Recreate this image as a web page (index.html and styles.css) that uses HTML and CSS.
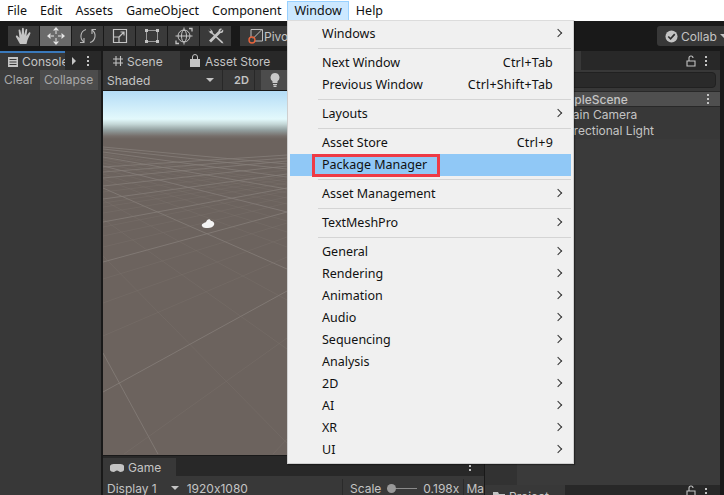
FILE: index.html
```html
<!DOCTYPE html>
<html lang="en">
<head>
    <meta charset="UTF-8">
    <title>Unity - Window menu</title>
    <link rel="stylesheet" href="styles.css">
</head>
<body>
    <!-- Menu bar -->
    <div class="menubar">
        <span class="menubar-item">File</span>
        <span class="menubar-item">Edit</span>
        <span class="menubar-item">Assets</span>
        <span class="menubar-item">GameObject</span>
        <span class="menubar-item">Component</span>
        <span class="menubar-item menubar-open">Window</span>
        <span class="menubar-item">Help</span>
    </div>

    <!-- Toolbar -->
    <div class="toolbar">
        <div class="tool-group">
            <div class="tool"><svg width="20" height="18" viewBox="0 0 20 18"><path d="M6 17 2 10c-.6-1.200.8-2 1.600-1L5.500 11 4.600 3.500c-.1-1.300 1.500-1.400 1.700-.2L7.500 8 8 1.800c.1-1.300 1.800-1.300 1.800 0L10.200 8l1.300-5.300c.3-1.200 1.900-.9 1.700.3L12.400 9l2.400-3.200c.8-1 2.100-.1 1.500 1L13.500 13 12.500 17Z" fill="#c4c4c4"/></svg></div>
            <div class="tool tool-active"><svg width="20" height="20" viewBox="0 0 20 20" fill="#e4e4e4"><path d="M10 1 13 4.500H7ZM10 19 7 15.500H13ZM1 10 4.500 7V13ZM19 10 15.500 13V7Z"/><path d="M9.500 5h1v3h-1ZM9.500 12h1v3h-1ZM5 9.500h3v1H5ZM12 9.500h3v1h-3Z"/></svg></div>
            <div class="tool"><svg width="20" height="20" viewBox="0 0 20 20" fill="none" stroke="#b8b8b8" stroke-width="1.100"><path d="M8 3.500A7 7 0 0 0 6 16"/><path d="M12 16.500A7 7 0 0 0 14 4"/><path d="M6 12V16.500H2M14 8V3.500H18"/></svg></div>
            <div class="tool"><svg width="18" height="18" viewBox="0 0 18 18" fill="none" stroke="#c4c4c4" stroke-width="1.200"><path d="M2.500 2.500H15.500V15.500H2.500ZM2.500 10H8V15.500M8 10 13 5M9.500 5H13V8.500"/></svg></div>
            <div class="tool"><svg width="18" height="18" viewBox="0 0 18 18" fill="#c4c4c4"><path d="M3.500 3.500h11v11h-11Z" fill="none" stroke="#9a9a9a"/><path d="M2 2h3v3H2ZM13 2h3v3h-3ZM2 13h3v3H2ZM13 13h3v3h-3Z"/></svg></div>
            <div class="tool"><svg width="20" height="20" viewBox="0 0 20 20" fill="none" stroke="#c4c4c4" stroke-width="1"><circle cx="10" cy="10" r="6"/><ellipse cx="10" cy="10" rx="2.500" ry="6"/><path d="M4 10h12M10 1.500v3M10 15.500v3M1.500 10h2.500M16 10h2.500"/><path d="M15 2.500h3v3M2 14.500v3h3" stroke-width="1.300"/></svg></div>
            <div class="tool"><svg width="20" height="20" viewBox="0 0 20 20" fill="#c4c4c4"><path d="M3.500 2 6.500 5 7 7 16.500 15.500 17.500 17.500 15.500 17 6 8 4 7 2 4 3.500 5.500 5 4.500Z"/><path d="M17 3.500 14.800 5.700 14 5 16 3c-1.500-1-3.500 0-3.500 2L3 14.500 5 16.500 14.500 7c2 .5 3.500-1.500 2.500-3.500Z"/></svg></div>
        </div>
        <div class="pivot">
            <svg width="16" height="16" viewBox="0 0 16 16" fill="none"><path d="M3 9V1.500H14.500V13H7M5 10.500 13.500 2" stroke="#bdbdbd"/><circle cx="4" cy="12" r="3" stroke="#e8643c" stroke-width="1.400"/></svg>
            <span>Pivot</span>
        </div>
        <div class="collab">
            <svg width="13" height="13" viewBox="0 0 14 14"><circle cx="7" cy="7" r="6.500" fill="#c4c4c4"/><path d="M3.500 7 6 9.500 10.500 4.500" fill="none" stroke="#303030" stroke-width="1.800"/></svg>
            <span>Collab</span>
            <span class="arrow-down arrow-collab"></span>
        </div>
    </div>

    <div class="workspace">
        <!-- Console -->
        <div class="panel-console">
            <div class="tabbar">
                <div class="tab tab-console">
                    <svg width="12" height="12" viewBox="0 0 12 12" fill="#c4c4c4"><path d="M1 1h10v10H1Zm1.500 2v1h7V3Zm0 2.500v1h7v-1Zm0 2.500v1h7V8Z" fill-rule="evenodd"/></svg>
                    <span class="tab-clip">Console</span>
                </div>
                <div class="tab-extra">
                    <span class="arrow-right"></span>
                    <span class="dots"><i></i><i></i><i></i></span>
                </div>
            </div>
            <div class="console-tools">
                <span class="console-btn">Clear</span>
                <span class="console-btn console-btn-on">Collapse</span>
            </div>
        </div>

        <!-- Scene + Game -->
        <div class="panel-center">
            <div class="tabbar">
                <div class="tab tab-scene">
                    <svg width="12" height="12" viewBox="0 0 12 12" fill="none" stroke="#c4c4c4" stroke-width="1.100"><path d="M4 1V11M8.500 1V11M1 4H11M1 8H11"/></svg>
                    <span>Scene</span>
                </div>
                <div class="tab tab-store">
                    <svg width="12" height="14" viewBox="0 0 12 14" fill="#c4c4c4"><path d="M1 5h10v8H1Z"/><path d="M3.500 5V3a2.500 2.500 0 0 1 5 0v2" fill="none" stroke="#c4c4c4"/></svg>
                    <span>Asset Store</span>
                </div>
            </div>
            <div class="scene-tools">
                <div class="shaded"><span>Shaded</span><span class="arrow-down"></span></div>
                <div class="btn-2d">2D</div>
                <div class="btn-light"><svg width="10" height="14" viewBox="0 0 10 14" fill="#c8c8c8"><path d="M5 0a4.500 4.500 0 0 1 2.500 8.200V10h-5V8.200A4.500 4.500 0 0 1 5 0ZM3 11h4v1H3Zm.5 1.500h3V14h-3Z"/></svg></div>
            </div>
            <div class="scene-view">
                <svg class="scene-grid" viewBox="103 92 382 363" fill="none">
                    <!-- major lines, two vanishing points -->
                    <g class="grid-major">
                        <path d="M103 393 287 292M103 263 287 213M103 223 287 189M103 200 287 175M103 187 287 167M103 179 287 162M103 173 287 159M103 168 287 156"/>
                        <path d="M103 354 287 692M103 189 287 270M103 167 287 213M103 158 287 190M103 153 287 178M103 150 287 170M103 148 287 165"/>
                    </g>
                    <g class="grid-minor">
                        <path d="M103 1137 287 743M103 637 287 440M103 470 287 339M103 337 287 258M103 304 287 238M103 280 287 224M103 248 287 204M103 237 287 198M103 228 287 192M103 214 287 184M103 208 287 180M103 204 287 177M103 193 287 171"/>
                        <path d="M103 257 287 444M103 220 287 350M103 201 287 301M103 180 287 248M103 175 287 233M103 170 287 222M103 164 287 205M103 161 287 199M103 159 287 194M103 156 287 186M103 155 287 183"/>
                    </g>
                </svg>
                <svg class="scene-gizmo" width="14" height="10" viewBox="0 0 14 10"><path d="M1 8C0 6 3 5 5 4 6 1 9 0 10 3c2 0 4 2 3 4-1 2-3 3-6 3-3 0-5 0-6-2Z" fill="#f4f4f4"/></svg>
            </div>
            <div class="game-tabbar">
                <div class="tab tab-game">
                    <svg width="14" height="10" viewBox="0 0 14 10" fill="#c4c4c4"><path d="M3.500 1h7a3.500 3.500 0 0 1 0 8c-1.500 0-2-1.500-3.500-1.500S5 9 3.500 9a3.500 3.500 0 0 1 0-8Z"/></svg>
                    <span>Game</span>
                </div>
                <span class="dots dots-game"><i></i><i></i><i></i></span>
            </div>
            <div class="game-tools">
                <div class="game-display"><span>Display 1</span><span class="arrow-down"></span></div>
                <div class="game-res">1920x1080</div>
                <div class="game-scale">
                    <span>Scale</span>
                    <span class="slider"><i></i></span>
                    <span>0.198x</span>
                </div>
                <div class="game-ma">Ma</div>
            </div>
        </div>

        <!-- Hierarchy + Project -->
        <div class="panel-right">
            <div class="tabbar tabbar-right">
                <div class="tab tab-hier"></div>
                <svg class="lock" width="10" height="12" viewBox="0 0 10 12" fill="none" stroke="#c4c4c4" stroke-width="1.100"><path d="M1 6h8v5H1ZM3 6V3a2 2 0 0 1 4 0"/></svg>
                <span class="dots"><i></i><i></i><i></i></span>
            </div>
            <div class="hier-search"><div class="search-box"></div></div>
            <div class="hier-scene">
                <span>SampleScene</span>
                <span class="dots"><i></i><i></i><i></i></span>
            </div>
            <div class="hier-item">Main Camera</div>
            <div class="hier-item">Directional Light</div>
            <div class="hier-fill"></div>
            <div class="project-tabbar">
                <div class="tab tab-project">
                    <svg width="12" height="10" viewBox="0 0 12 10" fill="#c4c4c4"><path d="M0 0h5l1 2h6v8H0Z"/></svg>
                    <span>Project</span>
                </div>
                <svg class="lock" width="10" height="12" viewBox="0 0 10 12" fill="none" stroke="#c4c4c4" stroke-width="1.100"><path d="M1 6h8v5H1ZM3 6V3a2 2 0 0 1 4 0"/></svg>
                <span class="dots"><i></i><i></i><i></i></span>
            </div>
        </div>
    </div>

    <!-- Open Window menu -->
    <div class="menu">
        <div class="menu-item"><span>Windows</span><span class="chev"></span></div>
        <div class="menu-sep"></div>
        <div class="menu-item"><span>Next Window</span><span class="shortcut">Ctrl+Tab</span></div>
        <div class="menu-item"><span>Previous Window</span><span class="shortcut">Ctrl+Shift+Tab</span></div>
        <div class="menu-sep"></div>
        <div class="menu-item"><span>Layouts</span><span class="chev"></span></div>
        <div class="menu-sep"></div>
        <div class="menu-item"><span>Asset Store</span><span class="shortcut">Ctrl+9</span></div>
        <div class="menu-item menu-hover"><span class="red-box">Package Manager</span></div>
        <div class="menu-sep"></div>
        <div class="menu-item"><span>Asset Management</span><span class="chev"></span></div>
        <div class="menu-sep"></div>
        <div class="menu-item"><span>TextMeshPro</span><span class="chev"></span></div>
        <div class="menu-sep"></div>
        <div class="menu-item"><span>General</span><span class="chev"></span></div>
        <div class="menu-item"><span>Rendering</span><span class="chev"></span></div>
        <div class="menu-item"><span>Animation</span><span class="chev"></span></div>
        <div class="menu-item"><span>Audio</span><span class="chev"></span></div>
        <div class="menu-item"><span>Sequencing</span><span class="chev"></span></div>
        <div class="menu-item"><span>Analysis</span><span class="chev"></span></div>
        <div class="menu-item"><span>2D</span><span class="chev"></span></div>
        <div class="menu-item"><span>AI</span><span class="chev"></span></div>
        <div class="menu-item"><span>XR</span><span class="chev"></span></div>
        <div class="menu-item"><span>UI</span><span class="chev"></span></div>
    </div>
</body>
</html>
```

FILE: styles.css
```css
html, body {
    height: 100%;
}

body {
    margin: 0;
    width: 724px;
    height: 495px;
    overflow: hidden;
    position: relative;
    display: flex;
    flex-direction: column;
    background-color: #191919;
    font-family: "Inter", "Liberation Sans", sans-serif;
    font-size: 12px;
    font-feature-settings: "calt" 0;
    color: #c4c4c4;
}

svg {
    flex: none;
}

/* Menu bar */
.menubar {
    flex: none;
    height: 21px;
    box-sizing: border-box;
    padding: 1px 0 0 1px;
    display: flex;
    align-items: stretch;
    background-color: #fff;
    font-family: "Noto Sans", sans-serif;
    font-size: 12.5px;
    color: #111;
}

.menubar-item {
    padding: 0 6px;
    line-height: 19px;
    margin-right: 1px;
}

.menubar-open {
    background-color: #cce8ff;
    box-shadow: inset 0 0 0 1px #99d1ff;
    margin-left: -1px;
    padding: 0 7px;
}

/* Toolbar */
.toolbar {
    flex: none;
    height: 30px;
    display: flex;
    align-items: center;
    padding-left: 8px;
    background-color: #191919;
}

.tool-group {
    display: flex;
    gap: 1px;
}

.tool {
    width: 31px;
    height: 20px;
    display: flex;
    align-items: center;
    justify-content: center;
    background-color: #3a3a3a;
}

.tool-active {
    background-color: #6a6a6a;
}

.pivot {
    margin-left: 9px;
    height: 20px;
    width: 60px;
    display: flex;
    align-items: center;
    padding-left: 8px;
    box-sizing: border-box;
    background-color: #3a3a3a;
}

.collab {
    margin-left: auto;
    width: 67px;
    height: 20px;
    display: flex;
    align-items: center;
    gap: 3px;
    padding-left: 8px;
    box-sizing: border-box;
    background-color: #383838;
    border-radius: 3px 0 0 3px;
    overflow: hidden;
    white-space: nowrap;
}

.arrow-collab {
    flex: none;
}

/* Panels */
.workspace {
    flex: 1;
    min-height: 0;
    display: flex;
    gap: 1px;
    background-color: #191919;
}

.panel-console {
    width: 101px;
    flex: none;
    background-color: #383838;
}

.panel-center {
    width: 381px;
    flex: none;
    margin-left: 1px;
    display: flex;
    flex-direction: column;
}

.panel-right {
    flex: 1;
    min-width: 0;
    display: flex;
    flex-direction: column;
    margin-right: 4px;
    background-color: #383838;
}

.tabbar {
    flex: none;
    height: 19px;
    display: flex;
    background-color: #282828;
}

.tab {
    display: flex;
    align-items: center;
    gap: 6px;
    box-sizing: border-box;
    background-color: #383838;
}

.tab-console {
    width: 65px;
    padding-left: 7px;
    gap: 3px;
    overflow: hidden;
    border-top: 2px solid #3a79bb;
    white-space: nowrap;
}

.tab-extra {
    flex: 1;
    display: flex;
    align-items: center;
    justify-content: space-between;
    padding: 0 12px 0 7px;
    background-color: #282828;
}

.arrow-right {
    width: 0;
    height: 0;
    border-left: 4px solid #c4c4c4;
    border-top: 4px solid transparent;
    border-bottom: 4px solid transparent;
}

.dots {
    display: flex;
    flex-direction: column;
    gap: 2px;
}

.dots i {
    width: 2px;
    height: 2px;
    background-color: #c4c4c4;
}

.console-tools {
    height: 20px;
    display: flex;
    background-color: #3c3c3c;
}

.console-btn {
    line-height: 20px;
    width: 40px;
    padding-left: 4px;
    box-sizing: border-box;
    color: #a8a8a8;
}

.console-btn-on {
    width: 58px;
    background-color: #4c4c4c;
}

.tab-scene {
    width: 77px;
    padding: 1px 0 0 9px;
    margin-right: 1px;
    gap: 3px;
}

.tab-store {
    width: 100px;
    padding: 1px 0 0 8px;
    gap: 4px;
    background-color: #282828;
}

.scene-tools {
    flex: none;
    height: 21px;
    box-sizing: border-box;
    display: flex;
    background-color: #383838;
    border-bottom: 1px solid #191919;
}

.shaded {
    width: 120px;
    box-sizing: border-box;
    padding: 0 8px 0 4px;
    display: flex;
    align-items: center;
    justify-content: space-between;
    border-right: 1px solid #282828;
}

.arrow-down {
    width: 0;
    height: 0;
    border-top: 4px solid #c4c4c4;
    border-left: 4px solid transparent;
    border-right: 4px solid transparent;
}

.btn-2d {
    width: 26px;
    box-sizing: border-box;
    margin-left: 6px;
    text-align: center;
    line-height: 20px;
    font-size: 11px;
    font-weight: 600;
    border-right: 1px solid #282828;
}

.btn-light {
    width: 28px;
    margin-left: 6px;
    display: flex;
    align-items: center;
    justify-content: center;
    background-color: #4c4c4c;
}

.scene-view {
    flex: 1;
    min-height: 0;
    position: relative;
    overflow: hidden;
    background: linear-gradient(#b4dcf6 0, #e3f9fc 28px, #c5d8d8 33px, #93a0a0 39px, #766f6b 45px, #6c635e 48px);
}

.scene-grid {
    position: absolute;
    left: 0;
    top: 0;
    width: 382px;
    height: 363px;
}

.grid-major {
    stroke: #857d78;
    stroke-width: 0.8;
}

.grid-minor {
    stroke: #7d7570;
    stroke-width: 0.7;
    stroke-opacity: 0.5;
}

.scene-gizmo {
    position: absolute;
    left: 98px;
    top: 127px;
}

.game-tabbar {
    flex: none;
    height: 20px;
    margin-top: 1px;
    display: flex;
    align-items: stretch;
    justify-content: space-between;
    background-color: #282828;
}

.tab-game {
    width: 73px;
    margin-top: 2px;
    padding: 1px 0 0 7px;
    gap: 4px;
}

.dots-game {
    align-self: center;
    margin-right: 13px;
}

.game-tools {
    flex: none;
    height: 19px;
    box-sizing: border-box;
    padding-top: 5px;
    display: flex;
    align-items: center;
    background-color: #383838;
    white-space: nowrap;
}

.game-display {
    width: 80px;
    box-sizing: border-box;
    display: flex;
    align-items: center;
    justify-content: space-between;
    padding: 0 4px;
}

.game-res {
    width: 160px;
    box-sizing: border-box;
    padding-left: 4px;
}

.game-scale {
    display: flex;
    align-items: center;
    gap: 6px;
    width: 122px;
    height: 19px;
    padding-left: 7px;
    box-sizing: border-box;
    border-left: 1px solid #2a2a2a;
    border-right: 1px solid #2a2a2a;
}

.slider {
    width: 30px;
    height: 1px;
    position: relative;
    background-color: #8a8a8a;
}

.slider i {
    position: absolute;
    left: 0;
    top: -4px;
    width: 9px;
    height: 9px;
    border-radius: 50%;
    background-color: #999;
}

.game-ma {
    padding-left: 3px;
    overflow: hidden;
}

.tabbar-right {
    align-items: center;
    gap: 9px;
    padding-right: 13px;
}

.tab-hier {
    width: 96px;
    height: 19px;
    margin-right: auto;
}

.hier-search {
    flex: none;
    height: 21px;
    padding: 2px 4px 0 0;
    box-sizing: border-box;
}

.search-box {
    height: 16px;
    box-sizing: border-box;
    background-color: #2a2a2a;
    border: 1px solid #212121;
    border-radius: 4px;
}

.hier-scene {
    flex: none;
    height: 16px;
    box-sizing: border-box;
    display: flex;
    align-items: center;
    justify-content: space-between;
    padding: 0 11px 0 64px;
    font-weight: 500;
    background-color: #4f4f4f;
    border-top: 1px solid #282828;
    border-bottom: 1px solid #282828;
}

.hier-item {
    flex: none;
    height: 16px;
    line-height: 16px;
    padding-left: 77px;
}

.hier-fill {
    flex: 1;
    background: linear-gradient(90deg, #323232 32px, #3a3a3a 32px);
}

.project-tabbar {
    flex: none;
    height: 10px;
    display: flex;
    align-items: flex-start;
    gap: 9px;
    padding-right: 13px;
    background-color: #282828;
    overflow: hidden;
}

.project-tabbar .dots {
    margin-top: 3px;
}

.tab-project {
    width: 80px;
    height: 20px;
    padding: 3px 0 0 8px;
    gap: 4px;
    margin-right: auto;
}

/* Open menu */
.menu {
    position: absolute;
    left: 287px;
    top: 20px;
    width: 287px;
    height: 444px;
    box-sizing: border-box;
    padding: 2px;
    background-color: #f0f0f0;
    border: 1px solid #cfcfcf;
    border-top-color: #dcdcdc;
    box-shadow: 1px 1px 1px rgba(0, 0, 0, 0.35);
    font-family: "Noto Sans", sans-serif;
    font-size: 12.5px;
    color: #111;
}

.menu-item {
    height: 22px;
    box-sizing: border-box;
    display: flex;
    align-items: center;
    justify-content: space-between;
    padding: 0 15px 2px 32px;
}

.menu-hover {
    background-color: #90c8f6;
}

.menu-sep {
    height: 1px;
    margin: 3px 0 3px 28px;
    background-color: #d4d4d4;
}

.shortcut {
    margin-right: 3px;
    letter-spacing: 0.2px;
}

.chev {
    width: 5px;
    height: 5px;
    border-top: 1px solid #333;
    border-right: 1px solid #333;
    transform: rotate(45deg);
    margin-right: -5px;
}

.red-box {
    position: relative;
}

.red-box::after {
    content: "";
    position: absolute;
    left: -10px;
    top: -2px;
    right: -13px;
    bottom: -4px;
    border: 3px solid #ee3a45;
}
```
